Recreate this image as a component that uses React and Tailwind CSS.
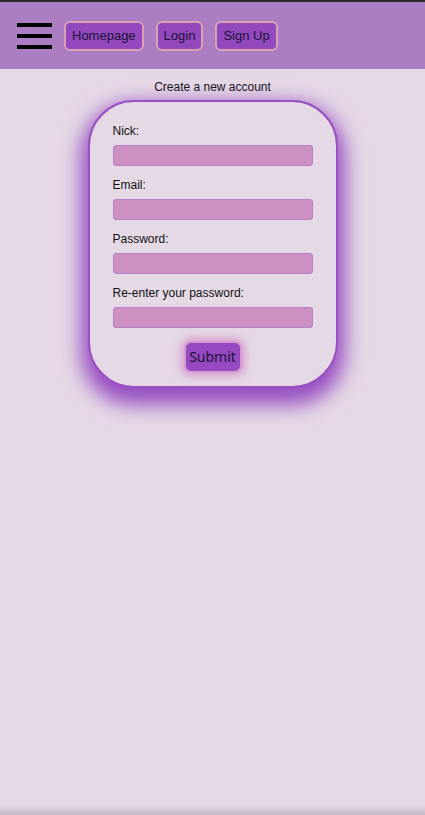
import React from "react";

const font = { fontFamily: '"Liberation Sans", Arial, sans-serif' };

function NavButton({ children }) {
  return (
    <button className="h-[30px] px-[6px] rounded-[6px] border-2 border-[#d9a2b4] bg-[#9349bd] text-[13px] text-[#1b1238] leading-none">
      {children}
    </button>
  );
}

function Field({ label, type = "text" }) {
  return (
    <div className="flex flex-col">
      <label className="text-[12px] leading-[14px] text-[#111] mb-[7px]">{label}</label>
      <input
        type={type}
        className="w-[200px] h-[21px] rounded-[3px] border border-[#b67fc8] bg-[#cc90c3] outline-none"
      />
    </div>
  );
}

export default function App() {
  return (
    <div className="min-h-[815px] bg-[#e5d9e6] relative" style={font}>
      <header className="h-[69px] bg-[#ab7dc3] border-t-2 border-[#2a2a2a] flex items-center pl-[17px] gap-[12px]">
        <div className="flex flex-col gap-[7px] w-[35px]">
          <div className="h-[4px] bg-black" />
          <div className="h-[4px] bg-black" />
          <div className="h-[4px] bg-black" />
        </div>
        <NavButton>Homepage</NavButton>
        <NavButton>Login</NavButton>
        <NavButton>Sign Up</NavButton>
      </header>

      <main className="flex flex-col items-center">
        <p className="text-[12px] leading-[14px] mt-[11px] mb-[6px] text-[#111]">Create a new account</p>
        <form
          className="w-[250px] h-[288px] rounded-[46px] border-2 border-[#9a50c3] bg-[#e5d9e6] flex flex-col items-center pt-[22px] shadow-[0_10px_20px_7px_rgba(142,62,190,0.9)]"
          onSubmit={(e) => e.preventDefault()}
        >
          <div className="flex flex-col gap-[12px]">
            <Field label="Nick:" />
            <Field label="Email:" type="email" />
            <Field label="Password:" type="password" />
            <Field label="Re-enter your password:" type="password" />
          </div>
          <button
            type="submit"
            className="mt-[13px] w-[58px] h-[32px] rounded-[7px] border-2 border-[#d69ad0] bg-[#9649c0] text-[14px] leading-none text-[#1b1238] shadow-[0_0_8px_3px_rgba(210,140,200,0.8)]"
            style={{ fontFamily: '"Noto Sans", "DejaVu Sans", sans-serif' }}
          >
            Submit
          </button>
        </form>
      </main>

      <div className="absolute left-0 right-0 bottom-0 h-[10px] bg-gradient-to-b from-transparent to-[#c6b9c8]" />
    </div>
  );
}
